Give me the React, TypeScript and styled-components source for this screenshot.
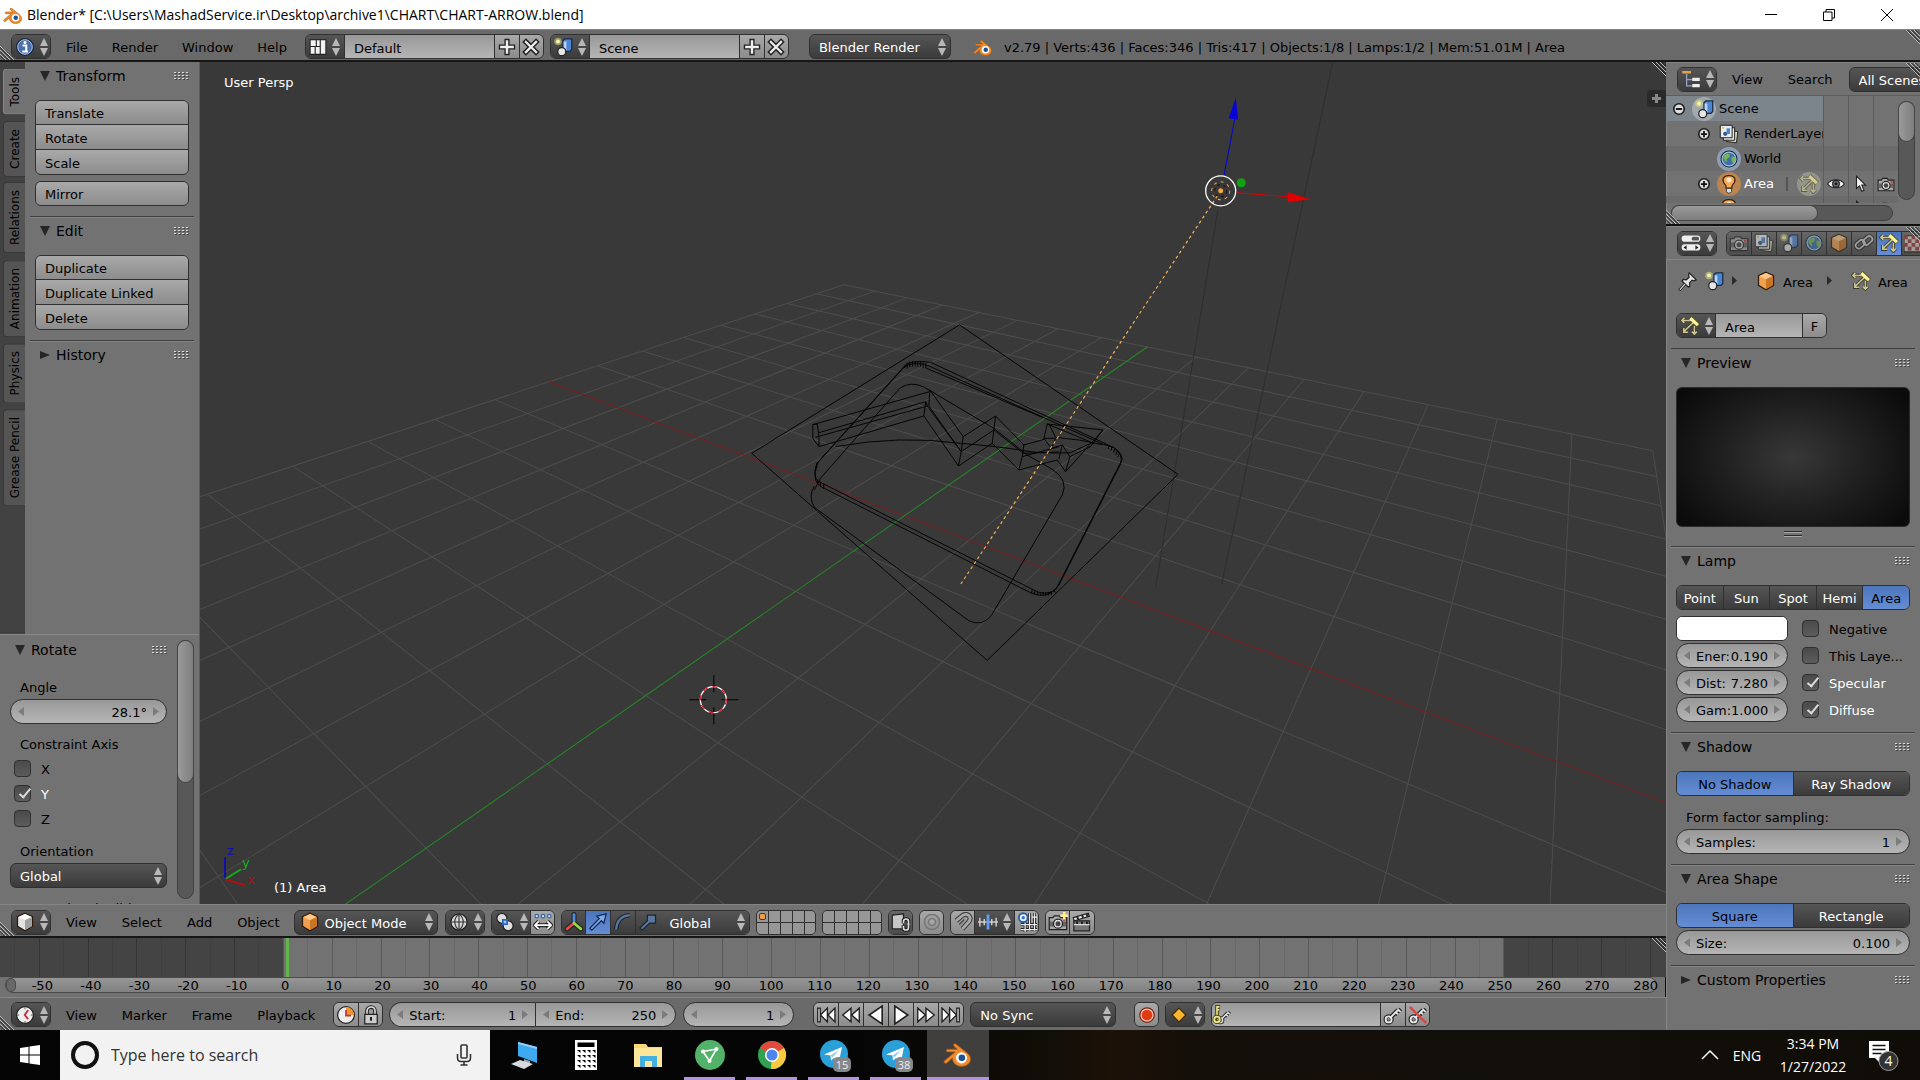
import React from "react";
import styled, { createGlobalStyle, css } from "styled-components";

const GlobalStyle = createGlobalStyle`
  *, *::before, *::after { box-sizing: border-box; }
  body { margin: 0; background: #393939; overflow: hidden; }
  button, input, select { font: inherit; color: inherit; margin: 0; padding: 0; border: 0; background: none; }
  h2 { margin: 0; font: inherit; }
`;

const font = `"DejaVu Sans", sans-serif`;
const winFont = `"Open Sans", "Noto Sans", sans-serif`;
const edge = "#303030";
const darkFill = "linear-gradient(#555, #3b3b3b)";
const lightFill = "linear-gradient(#a9a9a9, #8c8c8c)";
const fieldFill = "linear-gradient(#989898, #b5b5b5)";
const blueFill = "linear-gradient(#4c76bb, #648dd6)";

/* ---------- icons ---------- */

const SceneShape = () => (
  <>
    <circle cx="4" cy="3.5" r="3" fill="#dcdc7a" opacity=".55" />
    <circle cx="4" cy="3.5" r="1.6" fill="#f5f5a8" />
    <path d="M8 3l1.5-1.5H15V10l-1.5 1.5H8z" fill="#4c86d2" stroke="#1a2a44" />
    <path d="M8.5 3.5h2.2V11H8.5z" fill="#b9d4f5" />
    <circle cx="7" cy="11.7" r="3.2" fill="#e6e6e6" stroke="#222" />
  </>
);
const CubeShape = ({ a = "#ffc98c", b = "#f0a050", c = "#c97522" }) => (
  <>
    <path d="M8 1l6 2.7v7.8L8 15l-6-3.5V3.7z" fill={b} stroke="#2d1a08" />
    <path d="M8 1.6l5.3 2.3L8 6.5 2.7 3.9z" fill={a} />
    <path d="M8 6.5l5.5-2.5v7.3L8 14.4z" fill={c} />
  </>
);
const LampDataShape = () => (
  <>
    <path d="M3 12.5L11 5M1.5 3.5h7M3.5 1.5l-2 2 2 2M11.5 8v6M9.5 12.5l2 2 2-2M3 9.5v3.5h3.5" fill="none" stroke="#3c3a20" strokeWidth="2.6" />
    <path d="M8 1.5l6.5 6" stroke="#55521c" strokeWidth="4.2" />
    <path d="M3 12.5L11 5M1.5 3.5h7M3.5 1.5l-2 2 2 2M11.5 8v6M9.5 12.5l2 2 2-2M3 9.5v3.5h3.5" fill="none" stroke="#c9c698" strokeWidth="1.2" />
    <path d="M8.3 1.8l6 5.5" stroke="#fbf3a0" strokeWidth="2.6" />
  </>
);
const CameraShape = () => (
  <>
    <path d="M1 4.5h3L5 3h4l1 1.500h5V14H1z" fill="#aaa" stroke="#222" />
    <path d="M1.5 7.5h13v4h-13z" fill="#666" />
    <circle cx="8" cy="9.3" r="3.6" fill="#ddd" stroke="#222" />
    <circle cx="8" cy="9.3" r="2" fill="#444" />
    <path d="M12 5.5h2v1.500h-2z" fill="#c33" />
  </>
);
const WorldShape = () => (
  <>
    <circle cx="8" cy="8" r="6.3" fill="#3d6ea8" stroke="#16243a" />
    <circle cx="8" cy="8" r="5.5" fill="none" stroke="#9fc1e2" />
    <path d="M4 5l3-1.500 2 1-1 2.500-2 1 .5 3-2-2L3.500 7zM10 6l3 .5.500 2-2 3-1.500-2z" fill="#78b552" />
  </>
);
const BlenderShape = () => (
  <>
    <path d="M.8 11.800L6.500 7H2.500c-1 0-1-1.500 0-1.500h5.300L6 4c-.9-.9.2-1.900 1.100-1.200l6 4.800c3.500 3 1.500 7.200-3 7.200-3 0-5-2-5-4.500L2.200 12.900c-1 .8-2.200-.3-1.400-1.100z" fill="#f08a2c" stroke="#a2550f" strokeWidth=".4" />
    <circle cx="10" cy="10.2" r="3" fill="#fff" />
    <circle cx="10.2" cy="10.2" r="1.8" fill="#1d5490" />
  </>
);
const KeyShape = () => (
  <>
    <path d="M5.500 10.500L12 4M10 5.500l2 2M12 3.500l2 2" stroke="#222" strokeWidth="3.4" />
    <circle cx="4.5" cy="11.5" r="2.6" fill="none" stroke="#222" strokeWidth="3" />
    <path d="M5.500 10.500L12 4M10 5.500l2 2M12 3.500l2 2" stroke="#e8e8e8" strokeWidth="1.5" />
    <circle cx="4.5" cy="11.5" r="2.4" fill="none" stroke="#e8e8e8" strokeWidth="1.5" />
  </>
);

const icons: Record<string, React.ReactNode> = {
  info: (
    <>
      <circle cx="8" cy="8" r="6.7" fill="#4a70ac" stroke="#15233d" />
      <circle cx="8" cy="8" r="5.8" fill="none" stroke="#a9c0e4" strokeWidth=".8" />
      <path d="M6 6.800h3v4.400M5.800 11.600h4.600" stroke="#fff" strokeWidth="1.6" fill="none" />
      <circle cx="8" cy="4.3" r="1.2" fill="#fff" />
    </>
  ),
  layout: (
    <>
      <path d="M0.500 1h15v14h-15z" fill="#222" />
      <path d="M1.500 2h4.500v5H1.500zM7 2h2.500v5H7zM1.500 8h3.500v6H1.500zM6 8h3.500v6H6zM10.500 2H14.500v12h-4z" fill="#f2f2f2" />
    </>
  ),
  scene: <SceneShape />,
  cube: <CubeShape />,
  whiteCube: <CubeShape a="#fff" b="#e2e2e2" c="#a0a0a0" />,
  lampData: <LampDataShape />,
  camera: <CameraShape />,
  world: <WorldShape />,
  blender: <BlenderShape />,
  key: <KeyShape />,
  keyX: (
    <>
      <KeyShape />
      <path d="M1.500 1.500l13 13" stroke="#d24a4a" strokeWidth="2" />
    </>
  ),
  keySet: (
    <>
      <g transform="translate(3 3) scale(.8)"><KeyShape /></g>
      <path d="M4 9V1.500h2.500M4 3.800h2" stroke="#4b4818" strokeWidth="3" fill="none" />
      <path d="M4 9V1.500h2M4 3.800h1.800" stroke="#eee58a" strokeWidth="1.3" fill="none" />
      <circle cx="4" cy="11.5" r="2.2" fill="none" stroke="#4b4818" strokeWidth="3" />
      <circle cx="4" cy="11.5" r="2.2" fill="none" stroke="#eee58a" strokeWidth="1.5" />
    </>
  ),
  outliner: (
    <>
      <path d="M1 1.500h7v2H1z" fill="#e8a04a" />
      <path d="M4.500 4v9.500H9M4.500 8.500H9" stroke="#8ea6c8" fill="none" />
      <path d="M9 7h6v2.500H9zM9 12h6v2.500H9z" fill="#eee" />
    </>
  ),
  properties: (
    <>
      <rect x=".5" y="2" width="15" height="5" rx="2.5" fill="#eee" />
      <rect x="8.5" y="3" width="6" height="3" rx="1.5" fill="#555" />
      <rect x=".5" y="9" width="15" height="5" rx="2.5" fill="#eee" />
      <path d="M4.500 9.700L2 11.500l2.500 1.800zM11.500 9.700l2.500 1.800-2.500 1.800z" fill="#222" />
    </>
  ),
  layers: (
    <>
      <path d="M6 5l9 1-1 9-8-1z" fill="#dcdcb8" stroke="#222" strokeWidth=".8" />
      <path d="M3.500 3h9v10h-9z" fill="#e8e8e8" stroke="#222" strokeWidth=".8" />
      <path d="M1 1h9.500v10H1z" fill="#e9eef5" stroke="#222" strokeWidth=".8" />
      <circle cx="5" cy="7.8" r="1.7" fill="#38557f" />
      <path d="M6 3.500h2.800v4.500H6z" fill="#4c86d2" />
      <circle cx="3.3" cy="3" r="1" fill="#e3d44b" />
    </>
  ),
  link: (
    <>
      <g fill="none" stroke="#222" strokeWidth="3.2"><rect x="1" y="6.5" width="8" height="5" rx="2.5" transform="rotate(-40 5 9)" /><rect x="7" y="3.5" width="8" height="5" rx="2.5" transform="rotate(-40 11 6)" /></g>
      <g fill="none" stroke="#ccc" strokeWidth="1.4"><rect x="1" y="6.5" width="8" height="5" rx="2.5" transform="rotate(-40 5 9)" /><rect x="7" y="3.5" width="8" height="5" rx="2.5" transform="rotate(-40 11 6)" /></g>
    </>
  ),
  texture: (
    <>
      <path d="M0 2h16v13H0z" fill="#d8cfc8" stroke="#222" />
      <path d="M0 2h3v3H0zM6 2h3v3H6zM12 2h3v3h-3zM3 5h3v3H3zM9 5h3v3H9zM0 8h3v3H0zM6 8h3v3H6zM12 8h3v3h-3zM3 11h3v3H3zM9 11h3v3H9z" fill="#9c3a35" />
    </>
  ),
  pin: (
    <>
      <path d="M9 1.500l5.500 5.500-1.500.8-1.800-.5-2 2.200.3 2.500-1.200 1L3.200 8l1-1.300 2.500.3 2.200-2L8.500 3z" fill="#e4e4e4" stroke="#222" />
      <path d="M5.500 10.500l-4.500 5" stroke="#222" strokeWidth="2.2" />
      <path d="M5.500 10.500L1.500 15" stroke="#eee" strokeWidth=".9" />
    </>
  ),
  bulb: (
    <>
      <path d="M8 1.200c6 0 5.500 5 3 7.300-.6.600-.7 1.800-.7 2.700H5.700c0-.9-.1-2.100-.7-2.700-2.500-2.300-3-7.300 3-7.300z" fill="#f3a85a" stroke="#3d210a" />
      <circle cx="8" cy="4.8" r="2" fill="#ffe6c4" />
      <path d="M6 11.500h4V14l-1 1.300H7L6 14z" fill="#ddd" stroke="#333" strokeWidth=".7" />
    </>
  ),
  eye: (
    <>
      <path d="M.5 8C4 3 12 3 15.500 8 12 12.500 4 12.500.5 8z" fill="#eee" stroke="#222" />
      <circle cx="8" cy="7.8" r="3" fill="#6a7078" stroke="#222" />
      <circle cx="8" cy="7.8" r="1.2" fill="#111" />
    </>
  ),
  cursor: <path d="M4 1v11l2.700-2.300 2 4.800 2-.9-2-4.600H12z" fill="#f4f4f4" stroke="#222" />,
  minus: (
    <>
      <circle cx="8" cy="8" r="4.2" fill="#ddd" stroke="#1c1c1c" strokeWidth="1.3" />
      <path d="M5.500 8h5" stroke="#111" strokeWidth="1.5" />
    </>
  ),
  expand: (
    <>
      <circle cx="8" cy="8" r="4.2" fill="#ddd" stroke="#1c1c1c" strokeWidth="1.3" />
      <path d="M5.500 8h5M8 5.500v5" stroke="#111" strokeWidth="1.4" />
    </>
  ),
  wire: (
    <>
      <circle cx="8" cy="8" r="6.5" fill="#d6d6d6" stroke="#222" />
      <path d="M1.800 8h12.400M8 1.500v13M8 1.500c-4.500 3.500-4.500 9.500 0 13M8 1.500c4.500 3.500 4.500 9.500 0 13" stroke="#333" fill="none" strokeWidth=".9" />
    </>
  ),
  pivot: (
    <>
      <circle cx="5.5" cy="5" r="4" fill="#ddd" stroke="#222" />
      <circle cx="10.5" cy="11" r="4" fill="#ddd" stroke="#222" />
      <path d="M6.300 6.300h3.400v3.400H6.300z" fill="#9dc4f3" stroke="#2a66c0" strokeWidth="1.4" />
    </>
  ),
  centers: (
    <>
      <g fill="#cde1fa" stroke="#3c66a3"><circle cx="3" cy="3.3" r="1.4" /><circle cx="8" cy="3.3" r="1.4" /><circle cx="13" cy="3.3" r="1.4" /></g>
      <path d="M2 10.500h12M4.500 7.500l-3 3 3 3M11.500 7.500l3 3-3 3" stroke="#222" strokeWidth="3.2" fill="none" />
      <path d="M2 10.500h12M4.500 7.500l-3 3 3 3M11.500 7.500l3 3-3 3" stroke="#fff" strokeWidth="1.4" fill="none" />
    </>
  ),
  axes: (
    <>
      <path d="M8 9V2M8 9l-5.500 4.500M8 9l5.500 4.500" stroke="#222" strokeWidth="4" strokeLinecap="round" />
      <path d="M8 9V2" stroke="#4f8fe6" strokeWidth="2.2" strokeLinecap="round" />
      <path d="M8 9l-5.500 4.500" stroke="#e04b4b" strokeWidth="2.2" strokeLinecap="round" />
      <path d="M8 9l5.500 4.500" stroke="#8fdc3e" strokeWidth="2.2" strokeLinecap="round" />
    </>
  ),
  arrow: <path d="M1.500 13L9 5.300 7 3.300l7.500-1.800L12.700 9l-2-2L3 14.500z" fill="#80aaf0" stroke="#16294e" />,
  arc: (
    <>
      <path d="M2.500 14C3 7 7 3 13.500 2.500" fill="none" stroke="#1d2430" strokeWidth="3.6" />
      <path d="M2.500 14C3 7 7 3 13.500 2.500" fill="none" stroke="#5c779e" strokeWidth="1.8" />
    </>
  ),
  scale: <path d="M1.500 12.800l6-5.800V2.500H14v6.300H9.300l-6 5.700z" fill="#5c779e" stroke="#1d2430" />,
  lock3d: (
    <>
      <path d="M1 2.500l9-1v12H1z" fill="#c6c6c6" stroke="#222" />
      <path d="M10 9V7.500c0-2.500 4-2.500 4 0V9M10 10.500v2c0 2.500 4 2.500 4 0v-2" fill="none" stroke="#222" strokeWidth="3" />
      <path d="M10 9V7.500c0-2.500 4-2.500 4 0v5c0 2.500-4 2.500-4 0v-1.500" fill="none" stroke="#ddd" strokeWidth="1.3" />
    </>
  ),
  ring: (
    <>
      <circle cx="8" cy="8" r="6" fill="none" stroke="#777" strokeWidth="1.3" />
      <circle cx="8" cy="8" r="2.8" fill="#a5a5a5" stroke="#777" strokeWidth="1.3" />
    </>
  ),
  magnet: (
    <>
      <path d="M2.500 7L8 2.500c4-2 7.500 2 4.500 5.500L7.500 13.500" fill="none" stroke="#444" strokeWidth="4" />
      <path d="M2.500 7L8 2.500c4-2 7.500 2 4.500 5.500L7.500 13.500" fill="none" stroke="#aaa" strokeWidth="2.2" />
      <path d="M5 10l4-4" stroke="#444" />
    </>
  ),
  increment: (
    <>
      <path d="M0 8h16M1.500 4.500v7M5 5.500v5M11 5.500v5M14.500 4.500v7" stroke="#ccc" strokeWidth="1.2" />
      <path d="M8 2v12" stroke="#5aa0f5" strokeWidth="2.2" />
    </>
  ),
  snapGrid: (
    <>
      <path d="M10 1v14M14 1v14M3 10h13M3 14h13M6.500 8v8" stroke="#222" strokeWidth="2.4" />
      <path d="M10 1v14M14 1v14M3 10h13M3 14h13M6.500 8v8M12 4h4" stroke="#eee" strokeWidth="1" />
      <circle cx="5" cy="4.5" r="3.5" fill="#e8f2ff" stroke="#2d5fa8" strokeWidth="1.5" />
      <circle cx="5" cy="4.5" r="1.3" fill="#2d6fd0" />
    </>
  ),
  renderCam: (
    <>
      <CameraShape />
      <path d="M13 0v6M10 3h6" stroke="#fff08a" strokeWidth="2" />
    </>
  ),
  clapper: (
    <>
      <path d="M1.500 7h12.500v8H1.500z" fill="#777" stroke="#222" />
      <path d="M1 4.500l12-3.500.8 2.500L1.800 7z" fill="#eee" stroke="#222" />
      <path d="M4 3.700l1 2M8 2.600l1 2M11.500 1.600l1 2M4 7.500v2.500M8 7.500v2.500M12 7.500v2.500" stroke="#222" strokeWidth="1.6" />
      <path d="M1.500 10h12.500" stroke="#ddd" />
    </>
  ),
  clock: (
    <>
      <circle cx="8" cy="8" r="6.7" fill="#eee" stroke="#222" />
      <path d="M10.500 4L7.800 8l2.700 3.300" stroke="#c9313a" strokeWidth="1.5" fill="none" />
      <path d="M8 1.800v1.500M8 12.700v1.500M1.800 8h1.500M12.700 8h1.500" stroke="#777" />
    </>
  ),
  pie: (
    <>
      <circle cx="8" cy="8" r="6.7" fill="#eee" stroke="#222" />
      <path d="M8 8V1.500A6.500 6.500 0 0 1 14.500 8z" fill="#f0952c" />
      <path d="M8 4v4.500h4" stroke="#c9313a" strokeWidth="1.4" fill="none" />
    </>
  ),
  padlock: (
    <>
      <path d="M4.800 8V5c0-4.500 6.400-4.500 6.400 0v3" fill="none" stroke="#222" strokeWidth="3" />
      <path d="M4.800 8V5c0-4.500 6.400-4.500 6.400 0v3" fill="none" stroke="#ddd" strokeWidth="1.3" />
      <path d="M3 7.500h10V15H3z" fill="#ccc" stroke="#222" />
      <path d="M8 9.500v3" stroke="#222" strokeWidth="1.6" />
    </>
  ),
  record: (
    <>
      <circle cx="8" cy="8" r="5.8" fill="#f3c6b8" stroke="#7c2412" />
      <circle cx="8" cy="8" r="4.3" fill="#e03c14" />
    </>
  ),
  diamond: <path d="M8 2.500l5.500 5.500L8 13.500 2.500 8z" fill="#f7b62e" stroke="#3d2a05" />,
  jumpStart: <path d="M2 3h1.800v10H2zM9 3v10L4 8zM14.500 3v10L9.500 8z" fill="#fff" stroke="#222" />,
  prevKey: <path d="M8 3v10L2 8zM14 3v10L8.500 8z" fill="#fff" stroke="#222" />,
  playBack: <path d="M12.500 1.500v13L3 8z" fill="#fff" stroke="#222" strokeWidth="1.2" />,
  play: <path d="M3.500 1.500v13L13 8z" fill="#fff" stroke="#222" strokeWidth="1.2" />,
  nextKey: <path d="M2 3v10l5.500-5zM8 3v10l6-5z" fill="#fff" stroke="#222" />,
  jumpEnd: <path d="M1.500 3v10l5-5zM7 3v10l5-5zM12.200 3H14v10h-1.800z" fill="#fff" stroke="#222" />,
};

const IconSvg = styled.svg<{ $size: number; $dim?: boolean }>`
  width: ${(p) => p.$size}px;
  height: ${(p) => p.$size}px;
  flex: none;
  display: block;
  opacity: ${(p) => (p.$dim ? 0.6 : 1)};
`;
const Icon = ({ name, size = 20, dim }: { name: string; size?: number; dim?: boolean }) => (
  <IconSvg viewBox="0 0 16 16" $size={size} $dim={dim} aria-hidden>
    {icons[name]}
  </IconSvg>
);
const AddIcon = () => (
  <IconSvg viewBox="0 0 16 16" $size={18} aria-hidden>
    <path d="M8 3v10M3 8h10" stroke="#222" strokeWidth="4.6" strokeLinecap="square" />
    <path d="M8 3v10M3 8h10" stroke="#eee" strokeWidth="2.2" strokeLinecap="square" />
  </IconSvg>
);
const CloseIcon = () => (
  <IconSvg viewBox="0 0 16 16" $size={18} aria-hidden>
    <path d="M3.500 3.500l9 9M12.500 3.500l-9 9" stroke="#222" strokeWidth="4.6" strokeLinecap="square" />
    <path d="M3.500 3.500l9 9M12.500 3.500l-9 9" stroke="#eee" strokeWidth="2" strokeLinecap="square" />
  </IconSvg>
);

const Spin = styled.svg`
  width: 8px;
  height: 18px;
  flex: none;
  pointer-events: none;
  fill: #b8b8b8;
`;
const UpDown = () => (
  <Spin viewBox="0 0 8 18" aria-hidden>
    <path d="M4 0l4 8H0zM0 10h8l-4 8z" />
  </Spin>
);

/* ---------- shared controls ---------- */

const Bar = styled.header<{ $h?: number; $line?: boolean; $tone?: string; $top?: number }>`
  display: flex;
  align-items: center;
  height: ${(p) => p.$h ?? 33}px;
  flex: none;
  padding: ${(p) => p.$top ?? 0}px 0 0 11px;
  background: ${(p) => p.$tone || "#727272"};
  border-top: 1px solid #858585;
  border-bottom: ${(p) => (p.$line ? "2px solid #161616" : "0")};
  position: relative;
  overflow: hidden;
  white-space: nowrap;
`;
const Menus = styled.nav<{ $gap?: number; $end?: number }>`
  display: flex;
  gap: ${(p) => p.$gap ?? 25}px;
  padding: 2px ${(p) => p.$end ?? 16}px 0 15px;
`;
const MenuButton = styled.button`
  line-height: 24px;
`;
const fills = { dark: darkFill, light: lightFill, field: fieldFill, blue: blueFill, dim: "linear-gradient(#666, #4c4c4c)" };
type Tone = keyof typeof fills;
const Group = styled.div<{ $gap?: number; $grow?: boolean }>`
  display: flex;
  flex: none;
  height: 25px;
  border: 1px solid ${edge};
  border-radius: 6px;
  overflow: hidden;
  margin-right: ${(p) => p.$gap ?? 0}px;
  ${(p) => p.$grow && css`width: 100%;`}
  & > * + * { border-left: 1px solid ${edge}; }
`;
const Cell = styled.button<{ $tone?: Tone; $w?: number; $left?: boolean; $text?: boolean }>`
  display: flex;
  align-items: center;
  justify-content: ${(p) => (p.$left ? "flex-start" : "center")};
  gap: 5px;
  ${(p) => (p.$w ? css`width: ${p.$w}px;` : css`flex: 1;`)}
  min-width: 0;
  padding-top: ${(p) => (p.$text ? 2 : 0)}px;
  background: ${(p) => fills[p.$tone || "light"]};
  color: ${(p) => (p.$tone === "dark" ? "#fff" : "#000")};
`;
const TextInput = styled.input<{ $w: number }>`
  width: ${(p) => p.$w}px;
  padding: 3px 0 0 9px;
  background: ${fieldFill};
  color: #000;
`;
const SelectBox = styled.label<{ $w?: number; $bare?: boolean; $gap?: number; $icon?: boolean }>`
  display: grid;
  grid-template-columns: auto 1fr auto;
  align-items: center;
  height: ${(p) => (p.$bare ? 23 : 25)}px;
  ${(p) => (p.$w ? css`width: ${p.$w}px;` : css`width: 100%;`)}
  flex: none;
  margin-right: ${(p) => p.$gap ?? 0}px;
  border: ${(p) => (p.$bare ? "0" : `1px solid ${edge}`)};
  border-radius: ${(p) => (p.$bare ? 0 : 6)}px;
  background: ${darkFill};
  color: #fff;
  select {
    grid-column: 1 / -1;
    grid-row: 1;
    appearance: none;
    height: 23px;
    padding: 2px 0 0 ${(p) => (p.$icon ? 29 : 9)}px;
  }
  svg { grid-row: 1; pointer-events: none; }
  svg:first-of-type:not(:last-of-type) { grid-column: 1; margin-left: 5px; }
  svg:last-of-type { grid-column: 3; margin-right: 4px; }
`;
const Select = ({ label, value, icon, ...rest }: { label: string; value: string; icon?: string; w?: number; bare?: boolean; gap?: number }) => (
  <SelectBox $w={rest.w} $bare={rest.bare} $gap={rest.gap} $icon={!!icon}>
    {icon && <Icon name={icon} />}
    <select aria-label={label} defaultValue={value}>
      <option>{value}</option>
    </select>
    <UpDown />
  </SelectBox>
);
const EditorType = ({ icon, label, gap = 0 }: { icon: string; label: string; gap?: number }) => (
  <Group $gap={gap}>
    <Cell $tone="dark" $w={38} aria-label={label}>
      <Icon name={icon} />
      <UpDown />
    </Cell>
  </Group>
);

const NumBox = styled.label<{ $w?: number; $side?: "left" | "right"; $gap?: number }>`
  display: flex;
  align-items: center;
  gap: 6px;
  ${(p) => (p.$w ? css`width: ${p.$w}px;` : css`width: 100%;`)}
  flex: none;
  height: 25px;
  padding: 0 7px;
  margin-right: ${(p) => p.$gap ?? 0}px;
  border: 1px solid ${edge};
  ${(p) => p.$side === "left" && css`border-right: 0;`}
  border-radius: ${(p) => (p.$side === "left" ? "13px 0 0 13px" : p.$side === "right" ? "0 13px 13px 0" : "13px")};
  background: ${fieldFill};
  color: #000;
  span { margin-right: -6px; padding-top: 2px; }
  input { flex: 1; width: 0; min-width: 0; padding-top: 2px; text-align: right; }
`;
const Tri = styled.svg`
  width: 6px;
  height: 9px;
  flex: none;
  fill: #7c7c7c;
`;
const NumField = ({ label, value, name, w, side, gap }: { label?: string; value: string; name?: string; w?: number; side?: "left" | "right"; gap?: number }) => (
  <NumBox $w={w} $side={side} $gap={gap}>
    <Tri viewBox="0 0 6 9"><path d="M6 0v9L0 4.500z" /></Tri>
    {label && <span>{label}</span>}
    <input defaultValue={value} aria-label={name || label} />
    <Tri viewBox="0 0 6 9"><path d="M0 0v9l6-4.500z" /></Tri>
  </NumBox>
);

const CheckRow = styled.label`
  display: flex;
  align-items: center;
  gap: 10px;
  height: 25px;
  color: #000;
  white-space: nowrap;
  span { padding-top: 2px; }
  &:has(input:checked) { color: #fff; }
  input {
    appearance: none;
    flex: none;
    display: grid;
    place-items: center;
    width: 17px;
    height: 17px;
    border: 1px solid ${edge};
    border-radius: 4px;
    background: linear-gradient(#4a4a4a, #5c5c5c);
  }
  input:checked::after {
    content: "";
    width: 6px;
    height: 12px;
    margin: 0 0 6px 4px;
    border: solid #ddd;
    border-width: 0 2px 2px 0;
    transform: rotate(40deg);
  }
`;
const Check = ({ text, on }: { text: string; on?: boolean }) => (
  <CheckRow>
    <input type="checkbox" defaultChecked={on} />
    <span>{text}</span>
  </CheckRow>
);

const PanelBox = styled.section`
  margin: 0 5px;
  padding: 0 5px 10px;
  & + & { border-top: 1px solid #3f3f3f; box-shadow: inset 0 1px #868686; }
`;
const PanelHead = styled.div`
  display: flex;
  align-items: center;
  height: 29px;
  margin-bottom: 9px;
  padding: 0 0 2px 5px;
  font-size: 14px;
  h2 { flex: 1; }
  button { display: flex; align-items: center; gap: 6px; line-height: 24px; }
`;
const Fold = styled.svg`
  width: 10px;
  height: 10px;
  fill: #262626;
`;
const GripSvg = styled.svg`
  width: 15px;
  height: 8px;
  flex: none;
`;
const Grip = () => (
  <GripSvg viewBox="0 0 15 8" shapeRendering="crispEdges" aria-hidden>
    {[0, 3, 6].map((y) => [0, 4, 8, 12].map((x) => (
      <g key={`${x}-${y}`}>
        <rect x={x + 1} y={y + 1} width="2" height="1" fill="#484848" />
        <rect x={x} y={y} width="2" height="1" fill="#ddd" />
      </g>
    )))}
  </GripSvg>
);
const Panel = ({ title, closed, children }: { title: string; closed?: boolean; children?: React.ReactNode }) => (
  <PanelBox>
    <PanelHead>
      <h2>
        <button aria-expanded={!closed}>
          <Fold viewBox="0 0 10 10"><path d={closed ? "M0 1l10 4-10 4z" : "M0 0h10L5 10z"} /></Fold>
          {title}
        </button>
      </h2>
      <Grip />
    </PanelHead>
    {children}
  </PanelBox>
);

const CornerSvg = styled.svg<{ $right?: boolean }>`
  position: absolute;
  width: 14px;
  height: 14px;
  ${(p) => (p.$right ? css`right: 0; top: 0;` : css`left: 0; bottom: 0;`)}
  pointer-events: none;
`;
const Corner = ({ right }: { right?: boolean }) => (
  <CornerSvg viewBox="0 0 14 14" $right={right} aria-hidden>
    {[0, 4, 8].map((k) => (
      <g key={k}>
        <path d={right ? `M${k} 0L14 ${14 - k}` : `M0 ${k}L${14 - k} 14`} stroke="#bbb" />
        <path d={right ? `M${k + 1.5} 0L14 ${12.5 - k}` : `M0 ${k + 1.5}L${12.5 - k} 14`} stroke="#1c1c1c" />
      </g>
    ))}
  </CornerSvg>
);

/* ---------- page frame ---------- */

const Page = styled.div`
  display: flex;
  flex-direction: column;
  height: 100vh;
  overflow: hidden;
  font: 13px ${font};
  color: #000;
`;
const TitleBar = styled.div`
  display: flex;
  align-items: center;
  height: 29px;
  flex: none;
  gap: 4px;
  padding-left: 3px;
  background: #fff;
  font: 14px ${winFont};
  span { flex: 1; }
`;
const WindowButton = styled.button`
  display: grid;
  place-items: center;
  width: 58px;
  height: 29px;
  margin-right: -4px;
  svg { width: 12px; height: 12px; fill: none; stroke: #000; }
`;
const WindowButtons = styled.div`
  display: flex;
  gap: 4px;
  padding-right: 8px;
`;
const Status = styled.span`
  padding: 2px 0 0 11px;
`;
const Work = styled.div`
  display: grid;
  grid-template-columns: minmax(0, 1fr) 254px;
  flex: 1;
  min-height: 0;
`;
const Main = styled.main`
  display: flex;
  flex-direction: column;
  min-width: 0;
  min-height: 0;
`;
const Stage = styled.div`
  display: flex;
  flex: 1;
  min-height: 0;
`;

/* ---------- tool shelf ---------- */

const Shelf = styled.aside`
  display: flex;
  flex-direction: column;
  width: 200px;
  flex: none;
  background: #727272;
  border-right: 1px solid #5c5c5c;
`;
const Tools = styled.div`
  display: flex;
  flex: 1;
  min-height: 0;
`;
const TabStrip = styled.div`
  display: flex;
  flex-direction: column;
  gap: 6px;
  width: 25px;
  flex: none;
  padding: 7px 0 0 3px;
  background: #424242;
`;
const Tab = styled.button<{ $on?: boolean }>`
  writing-mode: vertical-rl;
  transform: rotate(180deg);
  width: 22px;
  padding: 7px 0;
  font-size: 12px;
  line-height: 20px;
  border: 1px solid ${(p) => (p.$on ? "#888" : "#373737")};
  border-left: 0;
  border-radius: 0 4px 4px 0;
  background: ${(p) => (p.$on ? "#727272" : "#555")};
`;
const ToolPanels = styled.div`
  flex: 1;
  min-width: 0;
  overflow: hidden;
`;
const Stack = styled.div`
  display: flex;
  flex-direction: column;
  margin-bottom: 6px;
  border: 1px solid ${edge};
  border-radius: 6px;
  overflow: hidden;
  &:last-child { margin-bottom: 0; }
`;
const StackButton = styled.button`
  height: 23px;
  padding: 2px 0 0 9px;
  text-align: left;
  background: ${lightFill};
  & + & { height: 25px; border-top: 1px solid ${edge}; }
`;
const ToolStack = ({ items }: { items: string[] }) => (
  <Stack>{items.map((t) => <StackButton key={t}>{t}</StackButton>)}</Stack>
);
const Operator = styled.div`
  display: flex;
  height: 270px;
  flex: none;
  overflow: hidden;
  border-top: 1px solid #8a8a8a;
  & > section { flex: 1; margin: 0; padding: 1px 0 0 10px; }
`;
const Caption = styled.div`
  height: 25px;
  line-height: 27px;
  padding-left: 10px;
`;
const Block = styled.div<{ $pad?: number }>`
  padding: 0 0 7px ${(p) => p.$pad ?? 0}px;
`;
const Track = styled.div<{ $horizontal?: boolean }>`
  display: flex;
  flex: none;
  ${(p) => (p.$horizontal ? css`height: 16px; margin: 2px 27px 0 5px;` : css`width: 17px;`)}
  border: 1px solid #404040;
  border-radius: 9px;
  background: #585858;
`;
const Thumb = styled.div<{ $part: number; $horizontal?: boolean }>`
  ${(p) => (p.$horizontal ? css`width: ${p.$part}%;` : css`height: ${p.$part}%; width: 100%;`)}
  border-radius: 8px;
  background: ${(p) => (p.$horizontal ? "linear-gradient(#9a9a9a, #7e7e7e)" : "linear-gradient(90deg, #9a9a9a, #7e7e7e)")};
  box-shadow: 0 0 0 1px #454545;
`;
const OperatorScroll = styled.div`
  display: flex;
  padding: 5px 5px 5px 10px;
`;

/* ---------- viewport ---------- */

const Viewport = styled.section`
  position: relative;
  flex: 1;
  min-width: 0;
  background: #393939;
  color: #fff;
  overflow: hidden;
`;
const SceneSvg = styled.svg`
  display: block;
  width: 100%;
  height: 100%;
`;
const ViewLabel = styled.span<{ $bottom?: boolean }>`
  position: absolute;
  left: ${(p) => (p.$bottom ? 74 : 24)}px;
  ${(p) => (p.$bottom ? css`bottom: 9px;` : css`top: 13px;`)}
`;
const RegionToggle = styled.button`
  position: absolute;
  right: 0;
  top: 28px;
  width: 19px;
  height: 17px;
  display: grid;
  place-items: center;
  border-radius: 4px 0 0 4px;
  background: #2a2a2a;
  svg { width: 9px; height: 9px; stroke: #888; stroke-width: 3; }
`;

/* floor coordinates run from -1 to 1 on both axes */
const project = (u: number, v: number) => {
  const w = 1 - 0.3868 * u + 0.5479 * v;
  return [(143.1 * u + 870.8 * v + 904) / w, (-13.9 * u + 21.6 * v + 515.7) / w];
};
const floorLine = (a: [number, number], b: [number, number]) => {
  const [x1, y1] = project(...a);
  const [x2, y2] = project(...b);
  return { x1, y1, x2, y2 };
};
const steps = Array.from({ length: 17 }, (_, i) => (i - 8) / 8);

const View3D = () => (
  <Viewport aria-label="3D View">
    <SceneSvg viewBox="200 62 1465 842" preserveAspectRatio="xMidYMid slice">
      <g stroke="#4d4d4d" strokeWidth="1">
        {steps.filter((s) => s !== 0).map((s) => (
          <g key={s}>
            <line {...floorLine([s, -1], [s, 1])} />
            <line {...floorLine([-1, s], [1, s])} />
          </g>
        ))}
      </g>
      <line {...floorLine([-1, 0], [1, 0])} stroke="#7d1c1f" />
      <line {...floorLine([0, -1], [0, 1])} stroke="#238a23" />
      <path d="M1217 211L1155 587M1332 62L1221 584" stroke="#2e2e2e" fill="none" />
      <g transform="translate(740 300) scale(.33333)" fill="none" stroke="#000" strokeWidth="2.8">
        <path d="M657 75L1312 523 740 1081 34 460z" />
        <path d="M488 205L230 490Q220 512 226 540Q232 558 256 567L870 878Q925 902 955 855L1140 492Q1150 465 1118 442L1085 432 565 198Q515 180 488 205z" />
        <path d="M495 195L240 478Q222 500 224 525Q226 545 250 552L872 866Q915 892 946 868L1145 478Q1142 450 1105 436L980 378 570 187Q510 178 490 200M558 205L905 352" />
        <path d="M500 188v18M508 185v17M516 184v16M524 184v16M532 184v16M540 185v16M548 187v17M556 190v16M229 490v14M227 500v12M232 538v15M240 545v16M250 550v17M875 868l-2 12M883 872l-2 12M891 874v12M899 876v11M907 876v11M915 876v11M923 875v11M931 873l2 11M939 869l5 8M1105 437l-2 10M1114 440l-3 12M1122 446l-3 12M1130 453l-5 12M1136 462l-5 10" />
        <path d="M222 570L240 535 478 265Q510 242 552 262L700 350 760 385 860 465 935 508Q985 540 965 585L755 942Q728 982 685 962L222 622Q202 590 222 558" />
        <path d="M217 374L230 372Q236 395 236 440L217 415zM217 374L568 275M236 398L556 305M225 412L562 318M236 440L550 348" />
        <path d="M568 270L668 410 765 348 850 435 912 418M565 318L662 455 760 390 848 460 955 456M556 305L560 318 662 455M550 348L654 498 755 430 835 510 950 480M845 470L955 440" />
        <path d="M568 270L565 318M556 305L550 348M668 410L662 455 654 498M765 348L760 390 755 430M850 435L845 470 835 510" />
        <path d="M920 372L1087 390 975 515 950 480M920 372L910 415 932 445 965 435 988 470 975 515M910 415H945L932 445M1087 390L1050 440 988 470M920 372L1060 430M945 412L925 372M955 478L965 435" />
        <path d="M285 440Q480 405 660 430 780 440 850 452 900 462 990 458L1050 430M945 412Q1020 418 1085 434" />
      </g>
      <line x1="1220" y1="191" x2="959" y2="586" stroke="#f2b055" strokeDasharray="3 3" strokeWidth="1.2" />
      <g stroke="#0404d8" fill="#0404d8">
        <path d="M1223.500 175L1234 119" />
        <path d="M1235 98L1237.500 120 1228 118.500z" stroke="none" />
      </g>
      <g stroke="#e00000" fill="#e00000">
        <path d="M1236 193L1288 197" />
        <path d="M1310 199.500L1287 202.500V192.500z" stroke="none" />
      </g>
      <circle cx="1240.5" cy="183" r="4.5" fill="#12a012" />
      <circle cx="1220" cy="191" r="15" fill="none" stroke="#fff" strokeWidth="1.3" />
      <circle cx="1220" cy="191" r="9" fill="none" stroke="#f0a050" strokeDasharray="3 4" />
      <circle cx="1220" cy="191" r="6" fill="none" stroke="#111" strokeDasharray="3 3" />
      <circle cx="1220" cy="191" r="3" fill="#f5a742" stroke="#222" strokeWidth=".8" />
      <path d="M713.500 675v17M713.500 707v17M689 699.500h17M721 699.500h17" stroke="#000" />
      <circle cx="713" cy="699.5" r="13" fill="none" stroke="#fff" strokeWidth="1.3" />
      <circle cx="713" cy="699.5" r="13" fill="none" stroke="#d81e2c" strokeWidth="1.3" strokeDasharray="5 5" />
      <g strokeWidth="2" fontFamily="DejaVu Sans, sans-serif" fontSize="13">
        <path d="M225 879V857" stroke="#1010a8" />
        <path d="M225 879L241 869" stroke="#12b012" />
        <path d="M225 879L245 885" stroke="#b01010" />
        <text x="227" y="855" fill="#1010a8">z</text>
        <text x="242" y="867" fill="#12b012">y</text>
        <text x="247" y="884" fill="#b01010">x</text>
      </g>
    </SceneSvg>
    <ViewLabel>User Persp</ViewLabel>
    <ViewLabel $bottom>(1) Area</ViewLabel>
    <RegionToggle aria-label="Show region">
      <svg viewBox="0 0 9 9"><path d="M4.500 0v9M0 4.500h9" /></svg>
    </RegionToggle>
    <Corner right />
  </Viewport>
);

const LayerGrid = styled.div<{ $gap: number }>`
  display: grid;
  grid-template: repeat(2, 1fr) / repeat(5, 1fr);
  gap: 1px;
  width: 60px;
  height: 25px;
  flex: none;
  margin-right: ${(p) => p.$gap}px;
  border: 1px solid ${edge};
  border-radius: 5px;
  overflow: hidden;
  background: ${edge};
  button { background: #979797; display: flex; padding: 2px; }
`;
const Dot = styled.i`
  width: 7px;
  height: 7px;
  border: 1px solid #5c3508;
  border-radius: 2px;
  background: #f0a04a;
`;
const Layers = ({ first, gap }: { first?: boolean; gap: number }) => (
  <LayerGrid $gap={gap}>
    {Array.from({ length: 10 }, (_, i) => (
      <button key={i} aria-label={`Layer ${i + 1}`}>{first && i === 0 && <Dot />}</button>
    ))}
  </LayerGrid>
);

/* ---------- timeline ---------- */

const TimeTrack = styled.div`
  position: relative;
  height: 39px;
  flex: none;
  background: #727272;
`;
const TimeSvg = styled.svg`
  display: block;
  width: 100%;
  height: 100%;
`;
const Ruler = styled.div`
  height: 20px;
  flex: none;
  padding: 0 9px 4px 5px;
  background: #727272;
`;
const RulerBar = styled.div`
  display: flex;
  height: 16px;
  border: 1px solid #4a4a4a;
  border-radius: 8px;
  background: linear-gradient(#969696, #808080);
`;
const Knob = styled.i`
  width: 10px;
  flex: none;
  border-radius: 5px;
  background: #686868;
  border: 1px solid #4c4c4c;
`;
const Ticks = styled.div`
  flex: 1;
  display: grid;
  grid-template-columns: repeat(34, minmax(0, 1fr));
  margin: 0 -14px 0 2px;
  line-height: 15px;
  text-align: center;
`;
const frames = Array.from({ length: 34 }, (_, i) => i * 10 - 50);
const frameX = (f: number) => 283.2 + f * 4.879;

/* ---------- sidebar ---------- */

const Side = styled.aside`
  display: flex;
  flex-direction: column;
  min-width: 0;
  min-height: 0;
  overflow: hidden;
  background: #727272;
  box-shadow: inset 1px 0 #858585;
  outline: 1px solid #0c0c0c;
`;
const Outliner = styled.div`
  position: relative;
  display: flex;
  flex-direction: column;
  height: 131px;
  flex: none;
  border-top: 1px solid #5e5e5e;
  border-bottom: 2px solid #101010;
`;
const TreeArea = styled.div`
  display: flex;
  height: 107px;
  overflow: hidden;
`;
const Tree = styled.div`
  flex: 1;
  min-width: 0;
`;
const TreeRow = styled.div<{ $shade?: boolean }>`
  display: grid;
  grid-template-columns: 157px repeat(3, 25px);
  height: 25px;
  color: #000;
  background: ${(p) => (p.$shade ? "#6b6b6b" : "none")};
  & > div { display: flex; align-items: center; justify-content: center; border-left: 1px solid #5c5c5c; }
`;
const TreeName = styled.span<{ $depth: number; $tone?: string; $white?: boolean }>`
  display: flex;
  align-items: center;
  gap: 3px;
  overflow: hidden;
  white-space: nowrap;
  padding-left: ${(p) => 3 + p.$depth * 25}px;
  background: ${(p) => p.$tone || "none"};
  color: ${(p) => (p.$white ? "#fff" : "#000")};
`;
const Halo = styled.i<{ $color?: string }>`
  display: grid;
  place-items: center;
  width: 24px;
  height: 24px;
  flex: none;
  border-radius: 50%;
  background: ${(p) => p.$color || "none"};
`;
const Blank = styled.i`
  width: 20px;
  flex: none;
`;
const Divider = styled.i`
  width: 2px;
  height: 14px;
  flex: none;
  margin: 0 6px 0 9px;
  background: #555;
`;
const TreeScroll = styled.div`
  display: flex;
  height: 104px;
  padding: 5px 5px 0 0;
`;
const IconTabs = styled.div`
  display: flex;
  height: 25px;
  flex: none;
  margin-left: 9px;
  border: 1px solid ${edge};
  border-radius: 6px 0 0 6px;
  overflow: hidden;
  button + button { border-left: 1px solid ${edge}; }
`;
const Crumbs = styled.div`
  display: flex;
  align-items: center;
  height: 46px;
  padding: 0 0 4px 12px;
  border-top: 1px solid #858585;
`;
const CrumbPin = styled.span`
  display: flex;
  margin-right: 6px;
`;
const CrumbText = styled.span`
  padding: 4px 6px 0 7px;
`;
const CrumbArrow = styled.svg`
  width: 5px;
  height: 9px;
  flex: none;
  margin: 0 19px 0 8px;
  fill: #2a2a2a;
`;
const DataBlock = styled.div`
  padding: 8px 10px 10px;
`;
const Rule = styled.hr`
  height: 1px;
  flex: none;
  margin: 0 5px;
  border: 0;
  background: #3f3f3f;
`;
const Preview = styled.div`
  height: 140px;
  border: 1px solid #2a2a2a;
  border-radius: 6px;
  background: radial-gradient(ellipse 60% 72% at 50% 50%, #383838, #202020 50%, #0b0b0b 100%);
`;
const PreviewGrip = styled.div`
  width: 18px;
  height: 5px;
  margin: 4px auto 0;
  border: solid #2a2a2a;
  border-width: 1px 0;
  box-shadow: 0 1px #aaa, inset 0 1px #aaa;
`;
const TwoCol = styled.div`
  display: grid;
  grid-template-columns: 112px minmax(0, 1fr);
  gap: 2px 14px;
  padding-top: 6px;
`;
const Swatch = styled.input`
  appearance: none;
  width: 100%;
  height: 25px;
  padding: 0;
  border: 1px solid ${edge};
  border-radius: 6px;
  background: #fff;
  &::-webkit-color-swatch-wrapper { padding: 0; }
  &::-webkit-color-swatch { border: 0; border-radius: 5px; }
`;
const Spaced = styled.div<{ $top: number }>`
  padding-top: ${(p) => p.$top}px;
`;

/* ---------- taskbar ---------- */

const Taskbar = styled.footer`
  display: flex;
  height: 50px;
  flex: none;
  background: linear-gradient(90deg, #050505 0 45%, #120e08 55%, #1d1107 58%, #140f09 62%, #100d09);
  color: #fff;
  font: 14px ${winFont};
`;
const StartButton = styled.button`
  width: 60px;
  display: grid;
  place-items: center;
  svg { width: 20px; height: 20px; fill: #fff; }
`;
const Search = styled.label`
  display: flex;
  align-items: center;
  gap: 12px;
  width: 430px;
  padding: 0 18px 0 11px;
  background: #f2f2f2;
  color: #333;
  font-size: 16px;
  input { flex: 1; min-width: 0; }
  input::placeholder { color: #333; opacity: 1; }
`;
const Cortana = styled.i`
  width: 28px;
  height: 28px;
  flex: none;
  border: 4px solid #111;
  border-radius: 50%;
`;
const MicSvg = styled.svg`
  width: 16px;
  height: 22px;
  flex: none;
`;
const Apps = styled.nav`
  display: flex;
  flex: 1;
  padding-left: 3px;
`;
const AppButton = styled.button<{ $run?: boolean; $on?: boolean }>`
  width: 62px;
  padding: 0;
  display: grid;
  place-items: center;
  background: ${(p) => (p.$on ? "#403f3d" : "none")};
  position: relative;
  svg { width: 30px; height: 32px; }
  &::after {
    content: "";
    display: ${(p) => (p.$run ? "block" : "none")};
    position: absolute;
    left: ${(p) => (p.$on ? 0 : 5)}px;
    right: ${(p) => (p.$on ? 0 : 6)}px;
    bottom: 0;
    height: 3px;
    background: #b294dc;
  }
`;
const Count = styled.span`
  position: absolute;
  right: 14px;
  top: 27px;
  width: 18px;
  height: 15px;
  border-radius: 5px;
  background: #85888b;
  color: #eee;
  font-size: 11px;
  line-height: 15px;
  text-align: center;
`;
const Tray = styled.div`
  display: flex;
  align-items: center;
  padding-right: 12px;
  svg { display: block; }
`;
const TrayButton = styled.button<{ $w: number }>`
  width: ${(p) => p.$w}px;
  height: 50px;
  line-height: 23px;
  display: grid;
  place-items: center;
  align-content: center;
`;

const apps: { name: string; art: React.ReactNode; run?: boolean; on?: boolean; count?: string }[] = [
  {
    name: "Remote Desktop",
    art: (
      <>
        <path d="M9 3l19 5v16L9 17z" fill="#3fa9f0" />
        <path d="M9 3l19 5v2L9 5z" fill="#8fd0fa" />
        <path d="M15 20l6 2v3l-6-2z" fill="#9aa4ad" />
        <path d="M2 25l9-4 13 4-9 5z" fill="#d5dade" />
      </>
    ),
  },
  {
    name: "Calculator",
    art: (
      <>
        <path d="M4 1h22v30H4z" fill="#fff" />
        <path d="M6.500 3.500h17V8h-17z" fill="#000" />
        {[11, 16, 21, 26].map((y) => [6, 11, 16, 21].map((x) => <path key={`${x}${y}`} d={`M${x} ${y}h3.500v3z`} fill="#000" />))}
      </>
    ),
  },
  {
    name: "File Explorer",
    art: (
      <>
        <path d="M1 5h12l2 3h14v20H1z" fill="#f7d774" />
        <path d="M1 9h28v19H1z" fill="#fde59a" />
        <path d="M7 28V17h17v11h-5v-6h-7v6z" fill="#43b0e0" />
      </>
    ),
  },
  {
    name: "Network",
    run: true,
    art: (
      <>
        <circle cx="15" cy="16" r="15" fill="#53b269" />
        <path d="M8 12.500L21.500 10 14.500 22z" fill="none" stroke="#fff" strokeWidth="1.6" />
        <circle cx="8" cy="12.500" r="2" fill="#fff" /><circle cx="21.500" cy="10" r="2" fill="#fff" /><circle cx="14.500" cy="22" r="2" fill="#fff" />
      </>
    ),
  },
  {
    name: "Chrome",
    run: true,
    art: (
      <>
        <circle cx="15" cy="16" r="14" fill="#31a350" />
        <path d="M15 16L2.900 9A14 14 0 0 1 27.100 9z" fill="#e04a3a" />
        <path d="M15 16L27.100 9A14 14 0 0 1 14 30z" fill="#fbc93d" />
        <circle cx="15" cy="16" r="7" fill="#fff" />
        <circle cx="15" cy="16" r="5.5" fill="#4a86ee" />
      </>
    ),
  },
  ...["15", "38"].map((count) => ({
    name: `Telegram ${count}`,
    run: true,
    count,
    art: (
      <>
        <circle cx="15" cy="15" r="14" fill="#2b9fd8" />
        <path d="M5 15.500L23 8l-3 14.500-5-3.500-3 2.500-.5-5z" fill="#fff" />
        <path d="M11.500 16.500L20 11l-6.500 7.500z" fill="#9cc9e6" />
      </>
    ),
  })),
  { name: "Blender", run: true, on: true, art: <g transform="scale(1.85)"><BlenderShape /></g> },
];

export default function App() {
  return (
    <Page>
      <GlobalStyle />
      <TitleBar>
        <Icon name="blender" />
        <span>Blender* [C:\Users\MashadService.ir\Desktop\archive1\CHART\CHART-ARROW.blend]</span>
        <WindowButtons>
          <WindowButton aria-label="Minimize"><svg viewBox="0 0 12 12"><path d="M0 5.500h12" /></svg></WindowButton>
          <WindowButton aria-label="Restore"><svg viewBox="0 0 12 12"><path d="M.5 3h8.500v8.500H.5zM3 3V.5h8.500V9H9" /></svg></WindowButton>
          <WindowButton aria-label="Close"><svg viewBox="0 0 12 12"><path d="M0 0l12 12M12 0L0 12" /></svg></WindowButton>
        </WindowButtons>
      </TitleBar>

      <Bar $line $top={3} $tone="#696969">
        <EditorType icon="info" label="Info editor" />
        <Menus $gap={24} $end={18}>
          {["File", "Render", "Window", "Help"].map((m) => <MenuButton key={m}>{m}</MenuButton>)}
        </Menus>
        <Group $gap={6}>
          <Cell $tone="dark" $w={38} aria-label="Screen layout"><Icon name="layout" size={18} /><UpDown /></Cell>
          <TextInput $w={150} defaultValue="Default" aria-label="Screen" />
          <Cell $w={25} aria-label="Add screen"><AddIcon /></Cell>
          <Cell $w={24} aria-label="Delete screen"><CloseIcon /></Cell>
        </Group>
        <Group $gap={20}>
          <Cell $tone="dark" $w={38} aria-label="Browse scene"><Icon name="scene" /><UpDown /></Cell>
          <TextInput $w={150} defaultValue="Scene" aria-label="Scene" />
          <Cell $w={25} aria-label="Add scene"><AddIcon /></Cell>
          <Cell $w={24} aria-label="Delete scene"><CloseIcon /></Cell>
        </Group>
        <Select label="Render engine" value="Blender Render" w={142} gap={22} />
        <Icon name="blender" />
        <Status>v2.79 | Verts:436 | Faces:346 | Tris:417 | Objects:1/8 | Lamps:1/2 | Mem:51.01M | Area</Status>
        <Corner />
        <Corner right />
      </Bar>

      <Work>
        <Main>
          <Stage>
            <Shelf>
              <Tools>
                <TabStrip>
                  {["Tools", "Create", "Relations", "Animation", "Physics", "Grease Pencil"].map((t, i) => (
                    <Tab key={t} $on={i === 0}>{t}</Tab>
                  ))}
                </TabStrip>
                <ToolPanels>
                  <Panel title="Transform">
                    <ToolStack items={["Translate", "Rotate", "Scale"]} />
                    <ToolStack items={["Mirror"]} />
                  </Panel>
                  <Panel title="Edit">
                    <ToolStack items={["Duplicate", "Duplicate Linked", "Delete"]} />
                  </Panel>
                  <Panel title="History" closed />
                </ToolPanels>
              </Tools>
              <Operator>
                <Panel title="Rotate">
                  <Caption>Angle</Caption>
                  <Block><NumField value="28.1°" name="Angle" /></Block>
                  <Caption>Constraint Axis</Caption>
                  <Block $pad={4}>
                    <Check text="X" />
                    <Check text="Y" on />
                    <Check text="Z" />
                  </Block>
                  <Caption>Orientation</Caption>
                  <Block><Select label="Orientation" value="Global" /></Block>
                  <Caption>Proportional Editing</Caption>
                </Panel>
                <OperatorScroll><Track><Thumb $part={55} /></Track></OperatorScroll>
              </Operator>
            </Shelf>
            <View3D />
          </Stage>

          <Bar $line $h={34} $top={3}>
            <EditorType icon="whiteCube" label="3D View editor" />
            <Menus $end={15}>
              {["View", "Select", "Add", "Object"].map((m) => <MenuButton key={m}>{m}</MenuButton>)}
            </Menus>
            <Select label="Mode" value="Object Mode" icon="cube" w={144} gap={7} />
            <EditorType icon="wire" label="Viewport shading" gap={6} />
            <Group $gap={6}>
              <Cell $tone="dark" $w={38} aria-label="Pivot point"><Icon name="pivot" /><UpDown /></Cell>
              <Cell $w={24} aria-label="Manipulate centers"><Icon name="centers" /></Cell>
            </Group>
            <Group $gap={6}>
              <Cell $tone="dark" $w={23} aria-label="Manipulator"><Icon name="axes" /></Cell>
              <Cell $tone="blue" $w={25} aria-label="Translate"><Icon name="arrow" /></Cell>
              <Cell $tone="dark" $w={25} aria-label="Rotate"><Icon name="arc" /></Cell>
              <Cell $tone="dark" $w={25} aria-label="Scale"><Icon name="scale" /></Cell>
              <Select label="Transform orientation" value="Global" w={89} bare />
            </Group>
            <Layers first gap={6} />
            <Layers gap={6} />
            <Group $gap={6}><Cell $tone="dim" $w={23} aria-label="Lock to scene"><Icon name="lock3d" /></Cell></Group>
            <Group $gap={6}><Cell $w={23} aria-label="Proportional editing"><Icon name="ring" /></Cell></Group>
            <Group $gap={6}>
              <Cell $w={23} aria-label="Snap"><Icon name="magnet" /></Cell>
              <Cell $tone="dark" $w={40} aria-label="Snap element"><Icon name="increment" /><UpDown /></Cell>
              <Cell $w={24} aria-label="Grid snap"><Icon name="snapGrid" /></Cell>
            </Group>
            <Group>
              <Cell $w={23} aria-label="Render view"><Icon name="renderCam" /></Cell>
              <Cell $w={25} aria-label="Render animation"><Icon name="clapper" /></Cell>
            </Group>
            <Corner />
          </Bar>

          <TimeTrack>
            <TimeSvg viewBox="0 0 1665 39" preserveAspectRatio="none" shapeRendering="crispEdges">
              <rect width="283" height="39" fill="#444" />
              <rect x="1503" width="162" height="39" fill="#444" />
              {frames.map((f) => (
                <g key={f} stroke="#000">
                  <path d={`M${frameX(f)} 0v39`} strokeOpacity=".22" />
                  <path d={`M${frameX(f - 5)} 0v39`} strokeOpacity=".07" />
                </g>
              ))}
              <rect x="286" width="3" height="39" fill="#62b64a" />
            </TimeSvg>
            <Corner right />
          </TimeTrack>
          <Ruler>
            <RulerBar>
              <Knob />
              <Ticks>{frames.map((f) => <span key={f}>{f}</span>)}</Ticks>
            </RulerBar>
          </Ruler>
          <Bar $tone="#6a6a6a" $top={1}>
            <EditorType icon="clock" label="Timeline editor" />
            <Menus $end={18}>
              {["View", "Marker", "Frame", "Playback"].map((m) => <MenuButton key={m}>{m}</MenuButton>)}
            </Menus>
            <Group $gap={6}>
              <Cell $w={24} aria-label="Use preview range"><Icon name="pie" /></Cell>
              <Cell $w={24} aria-label="Lock time cursor"><Icon name="padlock" /></Cell>
            </Group>
            <NumField label="Start:" value="1" w={146} side="left" />
            <NumField label="End:" value="250" w={141} side="right" gap={7} />
            <NumField value="1" name="Current frame" w={111} gap={19} />
            <Group $gap={6}>
              {["jumpStart", "prevKey", "playBack", "play", "nextKey", "jumpEnd"].map((n, i) => (
                <Cell key={n} $w={i ? 25 : 24} aria-label={n}><Icon name={n} size={22} /></Cell>
              ))}
            </Group>
            <Select label="Sync" value="No Sync" w={146} gap={18} />
            <Group $gap={6}><Cell $w={23} aria-label="Record"><Icon name="record" /></Cell></Group>
            <Group $gap={6}><Cell $tone="dark" $w={38} aria-label="Keyframe type"><Icon name="diamond" /><UpDown /></Cell></Group>
            <Group>
              <Cell $tone="field" $w={168} $left aria-label="Keying set"><Icon name="keySet" /></Cell>
              <Cell $w={25} aria-label="Insert keyframe"><Icon name="key" /></Cell>
              <Cell $w={24} aria-label="Delete keyframe"><Icon name="keyX" /></Cell>
            </Group>
            <Corner />
          </Bar>
        </Main>

        <Side>
          <Bar>
            <EditorType icon="outliner" label="Outliner editor" />
            <Menus>
              {["View", "Search"].map((m) => <MenuButton key={m}>{m}</MenuButton>)}
            </Menus>
            <Select label="Display mode" value="All Scenes" w={140} />
            <Corner right />
          </Bar>
          <Outliner>
            <TreeArea>
              <Tree>
                <TreeRow>
                  <TreeName $depth={0} $tone="#7d858c"><Icon name="minus" /><Halo $color="#a3a8ac"><Icon name="scene" /></Halo>Scene</TreeName>
                  <div /><div /><div />
                </TreeRow>
                <TreeRow>
                  <TreeName $depth={1}><Icon name="expand" /><Halo><Icon name="layers" /></Halo>RenderLayers</TreeName>
                  <div /><div /><div />
                </TreeRow>
                <TreeRow $shade>
                  <TreeName $depth={1}><Blank /><Halo $color="#8f9db5"><Icon name="world" /></Halo>World</TreeName>
                  <div /><div /><div />
                </TreeRow>
                <TreeRow>
                  <TreeName $depth={1} $white><Icon name="expand" /><Halo $color="#b98550"><Icon name="bulb" /></Halo>Area<Divider /><Halo $color="#94948c"><Icon name="lampData" dim /></Halo></TreeName>
                  <div><Icon name="eye" size={18} /></div><div><Icon name="cursor" size={18} /></div><div><Icon name="camera" size={18} /></div>
                </TreeRow>
                <TreeRow $shade>
                  <TreeName $depth={1}><Icon name="expand" /><Halo><Icon name="bulb" size={22} /></Halo></TreeName>
                  <div><Icon name="eye" size={18} /></div><div><Icon name="cursor" size={18} /></div><div><Icon name="camera" size={18} /></div>
                </TreeRow>
              </Tree>
              <TreeScroll><Track><Thumb $part={40} /></Track></TreeScroll>
            </TreeArea>
            <Track $horizontal><Thumb $horizontal $part={66} /></Track>
            <Corner />
          </Outliner>

          <Bar>
            <EditorType icon="properties" label="Properties editor" />
            <IconTabs>
              {["camera", "layers", "scene", "world", "cube", "link", "lampData", "texture"].map((n, i) => (
                <Cell key={n} $w={i ? 25 : 24} $tone={n === "lampData" ? "blue" : "dim"} aria-label={`${n} tab`}>
                  <Icon name={n} dim={n !== "lampData"} />
                </Cell>
              ))}
            </IconTabs>
            <Corner right />
          </Bar>
          <Crumbs>
            <CrumbPin><Icon name="pin" /></CrumbPin>
            <Icon name="scene" />
            <CrumbArrow viewBox="0 0 5 9"><path d="M0 0l5 4.500L0 9z" /></CrumbArrow>
            <Icon name="cube" />
            <CrumbText>Area</CrumbText>
            <CrumbArrow viewBox="0 0 5 9"><path d="M0 0l5 4.500L0 9z" /></CrumbArrow>
            <Icon name="lampData" />
            <CrumbText>Area</CrumbText>
          </Crumbs>
          <DataBlock>
            <Group $gap={83}>
              <Cell $tone="dark" $w={38} aria-label="Browse lamp"><Icon name="lampData" /><UpDown /></Cell>
              <TextInput $w={87} defaultValue="Area" aria-label="Lamp name" />
              <Cell $text>F</Cell>
            </Group>
          </DataBlock>
          <Rule />
          <Panel title="Preview">
            <Preview />
            <PreviewGrip />
          </Panel>
          <Panel title="Lamp">
            <Group $grow>
              {["Point", "Sun", "Spot", "Hemi", "Area"].map((t) => (
                <Cell key={t} $text $tone={t === "Area" ? "blue" : "dark"}>{t}</Cell>
              ))}
            </Group>
            <TwoCol>
              <Swatch type="color" defaultValue="#ffffff" aria-label="Lamp color" />
              <Check text="Negative" />
              <NumField label="Ener:" value="0.190" />
              <Check text="This Laye..." />
              <NumField label="Dist:" value="7.280" />
              <Check text="Specular" on />
              <NumField label="Gam:" value="1.000" />
              <Check text="Diffuse" on />
            </TwoCol>
          </Panel>
          <Panel title="Shadow">
            <Group $grow>
              <Cell $text $tone="blue">No Shadow</Cell>
              <Cell $text $tone="dark">Ray Shadow</Cell>
            </Group>
            <Spaced $top={8}>
              <Caption>Form factor sampling:</Caption>
              <NumField label="Samples:" value="1" />
            </Spaced>
          </Panel>
          <Panel title="Area Shape">
            <Group $grow>
              <Cell $text $tone="blue">Square</Cell>
              <Cell $text $tone="dark">Rectangle</Cell>
            </Group>
            <Spaced $top={2}><NumField label="Size:" value="0.100" /></Spaced>
          </Panel>
          <Panel title="Custom Properties" closed />
        </Side>
      </Work>

      <Taskbar>
        <StartButton aria-label="Start">
          <svg viewBox="0 0 20 20"><path d="M0 3l8.500-1.300v7.800H0zM9.500 1.500L20 0v9.500H9.500zM0 10.500h8.500v7.800L0 17zM9.500 10.500H20V20L9.500 18.500z" /></svg>
        </StartButton>
        <Search>
          <Cortana />
          <input placeholder="Type here to search" aria-label="Search" />
          <MicSvg viewBox="0 0 16 22" fill="none" stroke="#333" strokeWidth="1.6">
            <rect x="5" y="1" width="6" height="13" rx="1" />
            <path d="M1.500 10v3.500c0 3 1.500 4 3.500 4h6c2 0 3.500-1 3.500-4V10M8 17.500V21M4.500 21h7" />
          </MicSvg>
        </Search>
        <Apps>
          {apps.map((a) => (
            <AppButton key={a.name} $run={a.run} $on={a.on} aria-label={a.name}>
              <svg viewBox="0 0 30 32">{a.art}</svg>
              {a.count && <Count>{a.count}</Count>}
            </AppButton>
          ))}
        </Apps>
        <Tray>
          <TrayButton $w={32} aria-label="Show hidden icons">
            <svg width="18" height="10" fill="none" stroke="#fff" strokeWidth="1.5"><path d="M1 9l8-8 8 8" /></svg>
          </TrayButton>
          <TrayButton $w={42}>ENG</TrayButton>
          <TrayButton $w={90}><span>3:34 PM</span><span>1/27/2022</span></TrayButton>
          <TrayButton $w={50} aria-label="4 new notifications">
            <svg width="32" height="34" viewBox="0 0 32 34">
              <path d="M2 3h20v17H12v4l-4-4H2z" fill="#fff" />
              <path d="M5.500 7.500h13M5.500 11.500h13M5.500 15.500h9" stroke="#111" strokeWidth="1.5" />
              <circle cx="21.5" cy="23" r="9.5" fill="#333" stroke="#999" />
              <text x="21.5" y="28" textAnchor="middle" fontSize="14" fill="#fff">4</text>
            </svg>
          </TrayButton>
        </Tray>
      </Taskbar>
    </Page>
  );
}
